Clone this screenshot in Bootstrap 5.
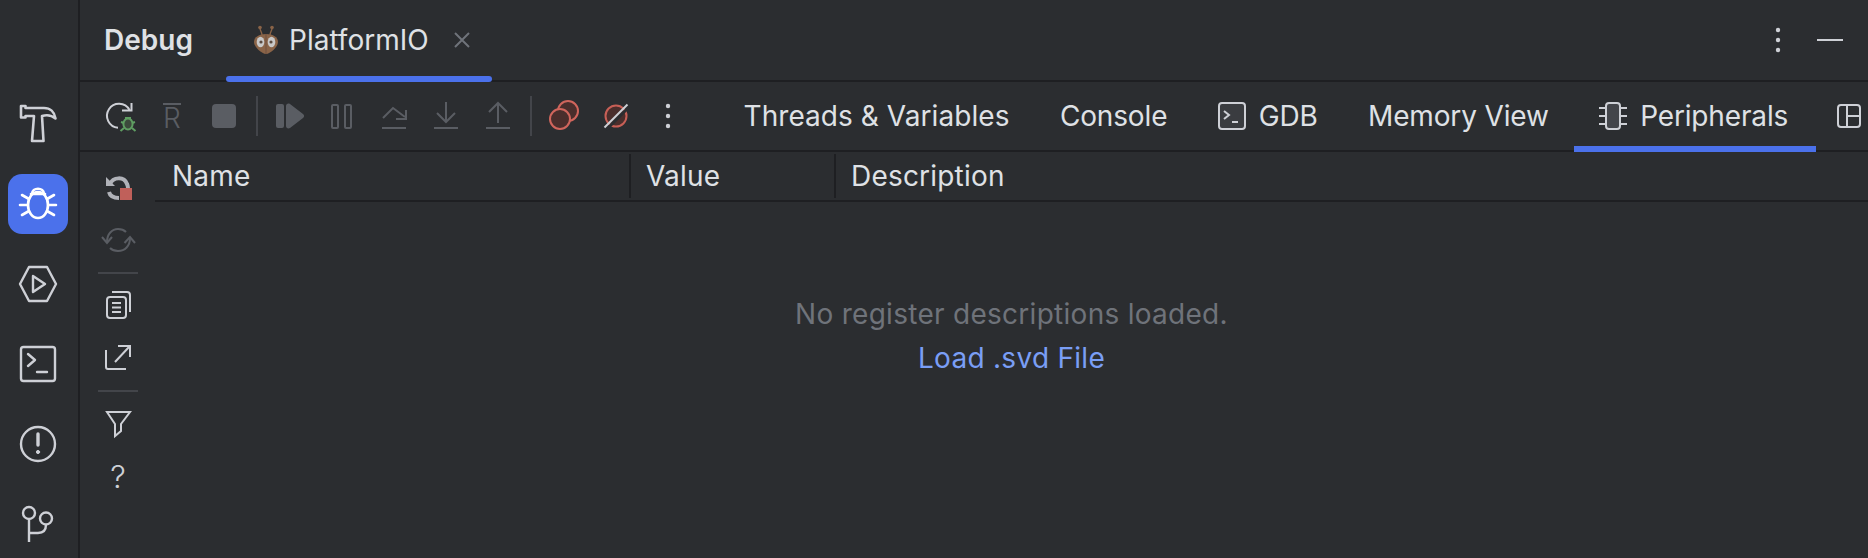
<!DOCTYPE html>
<html>

<head>
    <title>Debug - PlatformIO</title>
    <link href="https://cdn.jsdelivr.net/npm/bootstrap@5.3.0/dist/css/bootstrap.min.css" rel="stylesheet">
    <style>
        html, body {
            height: 558px;
            overflow: hidden;
        }

        body {
            background: #2b2d30;
            color: #dfe1e5;
            font-family: Inter, "Liberation Sans", sans-serif;
            font-size: 28px;
        }

        svg {
            display: block;
            flex: none;
        }

        .tool-rail {
            width: 80px;
            padding-top: 84px;
            border-right: 2px solid #1e1f22;
        }

        .rail-slot {
            flex: none;
            width: 76px;
            height: 80px;
        }

        .rail-active {
            width: 60px;
            height: 60px;
            border-radius: 14px;
            background: #4b71eb;
        }

        .top-bar {
            flex: none;
            height: 82px;
            border-bottom: 2px solid #1e1f22;
        }

        .top-title {
            width: 87px;
            margin-left: 24px;
            margin-right: 35px;
            font-weight: 600;
            white-space: nowrap;
        }

        .run-tab {
            width: 266px;
            height: 80px;
            padding-left: 28px;
        }

        .run-tab::after {
            content: "";
            position: absolute;
            left: 0;
            right: 0;
            bottom: -2px;
            height: 6px;
            border-radius: 3px;
            background: #4b71eb;
        }

        .run-name {
            margin-left: 11px;
            margin-right: 25px;
        }

        .top-dots {
            margin-right: 36px;
        }

        .top-min {
            margin-right: 25px;
        }

        .tool-bar {
            flex: none;
            height: 70px;
            padding-left: 14px;
            border-bottom: 2px solid #1e1f22;
        }

        .bar-btn {
            flex: none;
            width: 52px;
            height: 68px;
        }

        .bar-sep {
            flex: none;
            width: 2px;
            height: 40px;
            margin: 0 6px;
            background: #43454a;
        }

        .debug-tabs {
            margin-left: 24px;
            margin-right: 21px;
            letter-spacing: -.15px;
        }

        .debug-tabs .nav-link {
            height: 68px;
            padding: 0 25.2px;
            color: #dfe1e5;
            white-space: nowrap;
        }

        .debug-tabs .nav-link.tab-wide {
            padding-left: 25.5px;
            letter-spacing: .06px;
        }

        .debug-tabs .nav-link.active {
            padding-right: 27.5px;
            color: #dfe1e5;
        }

        .debug-tabs .nav-link.active::after {
            content: "";
            position: absolute;
            left: 0;
            right: 0;
            bottom: -2px;
            height: 6px;
            background: #4b71eb;
        }

        .tab-glyph {
            margin-right: 13px;
        }

        .side-bar {
            width: 75px;
            padding-top: 10px;
        }

        .side-btn {
            flex: none;
            width: 75px;
            height: 52px;
        }

        .side-sep {
            flex: none;
            width: 40px;
            height: 2px;
            margin: 6px 0 5px;
            background: #43454a;
        }

        .side-sep-low {
            margin: 7px 0 6px;
        }

        .tree-head {
            height: 50px;
            border-bottom: 2px solid #1e1f22;
            letter-spacing: .2px;
        }

        .tree-col {
            height: 44px;
            padding-left: 15px;
            border-right: 2px solid #1e1f22;
        }

        .tree-name {
            width: 476px;
            padding-left: 17px;
        }

        .tree-value {
            width: 205px;
        }

        .tree-desc {
            border-right: 0;
        }

        .empty-note {
            padding-top: 90px;
            line-height: 44px;
            letter-spacing: .28px;
        }

        .empty-text {
            color: #6f737a;
        }

        .empty-link {
            color: #7a9ef5;
            text-decoration: none;
        }
    </style>
</head>

<body>
    <div class="d-flex h-100">

        <!-- Left tool window strip -->
        <div class="tool-rail flex-shrink-0 d-flex flex-column">
            <div class="rail-slot d-flex align-items-center justify-content-center">
                <svg width="40" height="40" viewBox="0 1 40 40" fill="none" stroke="#ced0d6" stroke-width="2.6" stroke-linejoin="round">
                    <path d="M3 3H7.5V5H26C32 5 36.5 9 37.5 15.5C34 12.5 29 11.5 24 13L25.5 38H14L16 13H7.5V14.5H3Z" />
                </svg>
            </div>
            <div class="rail-slot d-flex align-items-center justify-content-center">
                <div class="rail-active d-flex align-items-center justify-content-center">
                    <svg width="40" height="40" viewBox="0 0 40 40" fill="none" stroke="#fff" stroke-width="2.6" stroke-linecap="round">
                        <ellipse cx="20" cy="21" rx="10" ry="13" />
                        <path d="M14 10C14 3 26 3 26 10" />
                        <path d="M13 10H27" />
                        <path d="M2 21H10M30 21H38M4 11L11 15M36 11L29 15M4 31L11 27M36 31L29 27" />
                    </svg>
                </div>
            </div>
            <div class="rail-slot d-flex align-items-center justify-content-center">
                <svg width="40" height="40" viewBox="0 0 40 40" fill="none" stroke="#ced0d6" stroke-width="2.4" stroke-linejoin="round">
                    <path d="M2 20L11 3H29L38 20L29 37H11Z" />
                    <path d="M15 12L27 20L15 28Z" />
                </svg>
            </div>
            <div class="rail-slot d-flex align-items-center justify-content-center">
                <svg width="40" height="40" viewBox="0 0 40 40" fill="none" stroke="#ced0d6" stroke-width="2.4" stroke-linecap="round" stroke-linejoin="round">
                    <rect x="3" y="3" width="34" height="34" rx="2.5" />
                    <path d="M10 10L17 16L10 22" />
                    <path d="M19 28H29" />
                </svg>
            </div>
            <div class="rail-slot d-flex align-items-center justify-content-center">
                <svg width="40" height="40" viewBox="0 0 40 40" fill="none" stroke="#ced0d6" stroke-width="2.4" stroke-linecap="round">
                    <circle cx="20" cy="20" r="17" />
                    <path d="M20 10V21" stroke-width="3.4" />
                    <circle cx="20" cy="28" r="1.6" fill="#ced0d6" stroke-width="1" />
                </svg>
            </div>
            <div class="rail-slot d-flex align-items-center justify-content-center">
                <svg width="40" height="40" viewBox="0 0 40 40" fill="none" stroke="#ced0d6" stroke-width="2.4">
                    <circle cx="11" cy="9" r="6" />
                    <circle cx="28" cy="14.5" r="6" />
                    <path d="M11 15V38" />
                    <path d="M11 29H20C25 29 28 26 28 20.5" />
                </svg>
            </div>
        </div>

        <div class="flex-grow-1 d-flex flex-column overflow-hidden">

            <!-- Tool window title -->
            <div class="top-bar d-flex align-items-center">
                <span class="top-title">Debug</span>
                <div class="run-tab position-relative d-flex align-items-center">
                    <svg width="24" height="30" viewBox="0 0 24 30">
                        <path d="M8 10C8 7 6 6 6 3M16 10C16 7 18 6 18 3" stroke="#8a6448" stroke-width="1.4" fill="none" />
                        <circle cx="6" cy="2.5" r="1.8" fill="#8a6448" />
                        <circle cx="18" cy="2.5" r="1.8" fill="#8a6448" />
                        <path d="M12 9C19 9 24 12 24 17C24 22 16 29 12 29C8 29 0 22 0 17C0 12 5 9 12 9Z" fill="#8a6448" />
                        <path d="M12 9V29" stroke="#6f5040" stroke-width="1" />
                        <ellipse cx="6.5" cy="17" rx="3.8" ry="5.2" fill="#c8c8c8" />
                        <ellipse cx="17.5" cy="17" rx="3.8" ry="5.2" fill="#c8c8c8" />
                        <circle cx="7" cy="17" r="1.6" fill="#5a4a40" />
                        <circle cx="17" cy="17" r="1.6" fill="#5a4a40" />
                    </svg>
                    <span class="run-name">PlatformIO</span>
                    <svg width="16" height="16" viewBox="0 0 16 16" stroke="#6f737a" stroke-width="2">
                        <path d="M1 1L15 15M15 1L1 15" />
                    </svg>
                </div>
                <div class="ms-auto d-flex align-items-center">
                    <svg class="top-dots" width="6" height="26" viewBox="0 0 6 26" fill="#ced0d6">
                        <circle cx="3" cy="3" r="2.2" />
                        <circle cx="3" cy="13" r="2.2" />
                        <circle cx="3" cy="23" r="2.2" />
                    </svg>
                    <svg class="top-min" width="26" height="2" viewBox="0 0 26 2">
                        <rect width="26" height="2" fill="#ced0d6" />
                    </svg>
                </div>
            </div>

            <!-- Debugger actions and tabs -->
            <div class="tool-bar d-flex align-items-start">
                <div class="bar-btn d-flex align-items-center justify-content-center">
                    <svg width="36" height="36" viewBox="0 0 36 36" fill="none" stroke-width="2">
                        <path d="M27.5 12A12 12 0 1 0 16 29.8" stroke="#ced0d6" />
                        <path d="M29.5 5V12.5H20" stroke="#ced0d6" />
                        <ellipse cx="26" cy="26" rx="4.6" ry="5.6" stroke="#5f9e62" fill="#3c4a3c" />
                        <path d="M23 20H29M18.5 33L22 30M33.5 33L30 30M19 24L22 25M33 24L30 25" stroke="#5f9e62" />
                    </svg>
                </div>
                <div class="bar-btn d-flex align-items-center justify-content-center">
                    <svg width="36" height="36" viewBox="0 0 36 36" fill="none">
                        <path d="M9 6H27" stroke="#5a5d63" stroke-width="2" />
                        <text x="18" y="30" text-anchor="middle" font-family="Inter, sans-serif" font-size="28" font-weight="300" fill="#5a5d63" stroke="none">R</text>
                    </svg>
                </div>
                <div class="bar-btn d-flex align-items-center justify-content-center">
                    <svg width="36" height="36" viewBox="0 0 36 36">
                        <rect x="6" y="6" width="24" height="24" rx="4" fill="#5a5d63" />
                    </svg>
                </div>
                <div class="bar-sep align-self-center"></div>
                <div class="bar-btn d-flex align-items-center justify-content-center">
                    <svg width="36" height="36" viewBox="0 0 36 36" fill="#5a5d63">
                        <rect x="4" y="6" width="8" height="24" rx="2" />
                        <path d="M14 8C14 6 16 5 18 6L31 16C32.5 17 32.5 19 31 20L18 30C16 31 14 30 14 28Z" />
                    </svg>
                </div>
                <div class="bar-btn d-flex align-items-center justify-content-center">
                    <svg width="36" height="36" viewBox="0 0 36 36" fill="none" stroke="#5a5d63" stroke-width="2">
                        <rect x="8" y="7" width="6" height="23" rx="1" />
                        <rect x="21" y="7" width="6" height="23" rx="1" />
                    </svg>
                </div>
                <div class="bar-btn d-flex align-items-center justify-content-center">
                    <svg width="36" height="36" viewBox="0 0 36 36" fill="none" stroke="#5a5d63" stroke-width="2">
                        <path d="M6 30H30" />
                        <path d="M7 20L17 10L29 19" />
                        <path d="M30 12V21H20" />
                    </svg>
                </div>
                <div class="bar-btn d-flex align-items-center justify-content-center">
                    <svg width="36" height="36" viewBox="0 0 36 36" fill="none" stroke="#5a5d63" stroke-width="2">
                        <path d="M6 30H30" />
                        <path d="M18 4V24" />
                        <path d="M9 15L18 24L27 15" />
                    </svg>
                </div>
                <div class="bar-btn d-flex align-items-center justify-content-center">
                    <svg width="36" height="36" viewBox="0 0 36 36" fill="none" stroke="#5a5d63" stroke-width="2">
                        <path d="M6 30H30" />
                        <path d="M18 25V5" />
                        <path d="M9 14L18 5L27 14" />
                    </svg>
                </div>
                <div class="bar-sep align-self-center"></div>
                <div class="bar-btn d-flex align-items-center justify-content-center">
                    <svg width="36" height="36" viewBox="0 0 36 36" fill="none" stroke="#d0655c" stroke-width="2">
                        <circle cx="22" cy="13" r="10" fill="#4a2e2c" />
                        <circle cx="14" cy="21" r="10" fill="#4a2e2c" />
                    </svg>
                </div>
                <div class="bar-btn d-flex align-items-center justify-content-center">
                    <svg width="36" height="36" viewBox="0 0 36 36" fill="none">
                        <circle cx="18" cy="18" r="10.5" stroke="#c75f56" stroke-width="2" fill="#4a2e2c" />
                        <path d="M8 32L31 9" stroke="#2b2d30" stroke-width="3" />
                        <path d="M6.5 29.5L29.5 6.5" stroke="#ced0d6" stroke-width="2" />
                    </svg>
                </div>
                <div class="bar-btn d-flex align-items-center justify-content-center">
                    <svg width="6" height="26" viewBox="0 0 6 26" fill="#ced0d6">
                        <circle cx="3" cy="3" r="2.2" />
                        <circle cx="3" cy="13" r="2.2" />
                        <circle cx="3" cy="23" r="2.2" />
                    </svg>
                </div>

                <ul class="nav debug-tabs flex-nowrap flex-shrink-0">
                    <li class="nav-item"><a class="nav-link tab-wide d-flex align-items-center" href="#">Threads &amp; Variables</a></li>
                    <li class="nav-item"><a class="nav-link d-flex align-items-center" href="#">Console</a></li>
                    <li class="nav-item">
                        <a class="nav-link d-flex align-items-center" href="#">
                            <svg class="tab-glyph" width="28" height="28" viewBox="0 0 28 28" fill="#3a3c40" stroke="#ced0d6" stroke-width="2">
                                <rect x="1" y="1" width="26" height="26" rx="3" />
                                <path d="M6 9L11 13L6 17" fill="none" />
                                <path d="M14 20H20" fill="none" />
                            </svg>
                            GDB
                        </a>
                    </li>
                    <li class="nav-item"><a class="nav-link d-flex align-items-center" href="#">Memory View</a></li>
                    <li class="nav-item">
                        <a class="nav-link active position-relative d-flex align-items-center" href="#">
                            <svg class="tab-glyph" width="28" height="28" viewBox="0 0 28 28" fill="none" stroke="#ced0d6" stroke-width="2">
                                <rect x="7" y="1" width="14" height="26" rx="3" fill="#43454a" />
                                <path d="M0 6H6M0 14H6M0 22H6M22 6H28M22 14H28M22 22H28" />
                            </svg>
                            Peripherals
                        </a>
                    </li>
                </ul>
                <svg class="align-self-center" width="24" height="24" viewBox="0 0 24 24" fill="none" stroke="#ced0d6" stroke-width="2">
                    <rect x="1" y="1" width="22" height="22" rx="3" />
                    <path d="M10 1V23M10 12H23" />
                </svg>
            </div>

            <div class="flex-grow-1 d-flex">
                <!-- Peripherals side actions -->
                <div class="side-bar flex-shrink-0 d-flex flex-column align-items-center">
                    <div class="side-btn d-flex align-items-center justify-content-center">
                        <svg width="36" height="36" viewBox="0 0 36 36" fill="none" stroke="#b0b2b8" stroke-width="4">
                            <path d="M10 14C13 7 24 6 27 14C27.5 15 28 16 28 18" />
                            <path d="M9 22C10 26 14 28 19 28" />
                            <path d="M6 7L15 16H6Z" fill="#b0b2b8" stroke="none" />
                            <rect x="20" y="18" width="12" height="12" fill="#c0605a" stroke="none" />
                        </svg>
                    </div>
                    <div class="side-btn d-flex align-items-center justify-content-center">
                        <svg width="36" height="36" viewBox="0 0 36 36" fill="none" stroke="#5a5d63" stroke-width="2">
                            <path d="M7 20C7 12 12 7 18 7C21 7 24 8 26 10" />
                            <path d="M30 16C30 24 25 29 18 29C15 29 12 28 10 26" />
                            <path d="M2 15L7 21L12 15" />
                            <path d="M24.5 21L30 15L35 21" />
                        </svg>
                    </div>
                    <div class="side-sep"></div>
                    <div class="side-btn d-flex align-items-center justify-content-center">
                        <svg width="36" height="36" viewBox="0 0 36 36" fill="none" stroke="#ced0d6" stroke-width="2">
                            <rect x="7" y="10" width="19" height="21" rx="3" />
                            <path d="M12 5H27C29 5 30 6 30 8V25" />
                            <path d="M12 16H21M12 20.5H21M12 25H21" />
                        </svg>
                    </div>
                    <div class="side-btn d-flex align-items-center justify-content-center">
                        <svg width="36" height="36" viewBox="0 0 36 36" fill="none" stroke="#ced0d6" stroke-width="2">
                            <path d="M6 11V28C6 29 7 30 8 30H26" />
                            <path d="M15 23L29 8" />
                            <path d="M18 7H30V18" />
                        </svg>
                    </div>
                    <div class="side-sep side-sep-low"></div>
                    <div class="side-btn d-flex align-items-center justify-content-center">
                        <svg width="36" height="36" viewBox="0 0 36 36" fill="none" stroke="#ced0d6" stroke-width="2">
                            <path d="M7 6H30L21 18V25L15 30V18Z" />
                        </svg>
                    </div>
                    <div class="side-btn d-flex align-items-center justify-content-center">
                        <svg width="36" height="36" viewBox="0 0 36 36">
                            <text x="18" y="30" text-anchor="middle" font-family="Inter, sans-serif" font-size="31" font-weight="300" fill="#ced0d6">?</text>
                        </svg>
                    </div>
                </div>

                <!-- Register tree -->
                <div class="flex-grow-1 d-flex flex-column">
                    <div class="tree-head d-flex align-items-center">
                        <div class="tree-col tree-name d-flex align-items-center">Name</div>
                        <div class="tree-col tree-value d-flex align-items-center">Value</div>
                        <div class="tree-col tree-desc d-flex align-items-center">Description</div>
                    </div>
                    <div class="empty-note text-center">
                        <div class="empty-text">No register descriptions loaded.</div>
                        <a class="empty-link" href="#">Load .svd File</a>
                    </div>
                </div>
            </div>
        </div>
    </div>

    <script src="https://cdn.jsdelivr.net/npm/bootstrap@5.3.0/dist/js/bootstrap.bundle.min.js"></script>
</body>

</html>
